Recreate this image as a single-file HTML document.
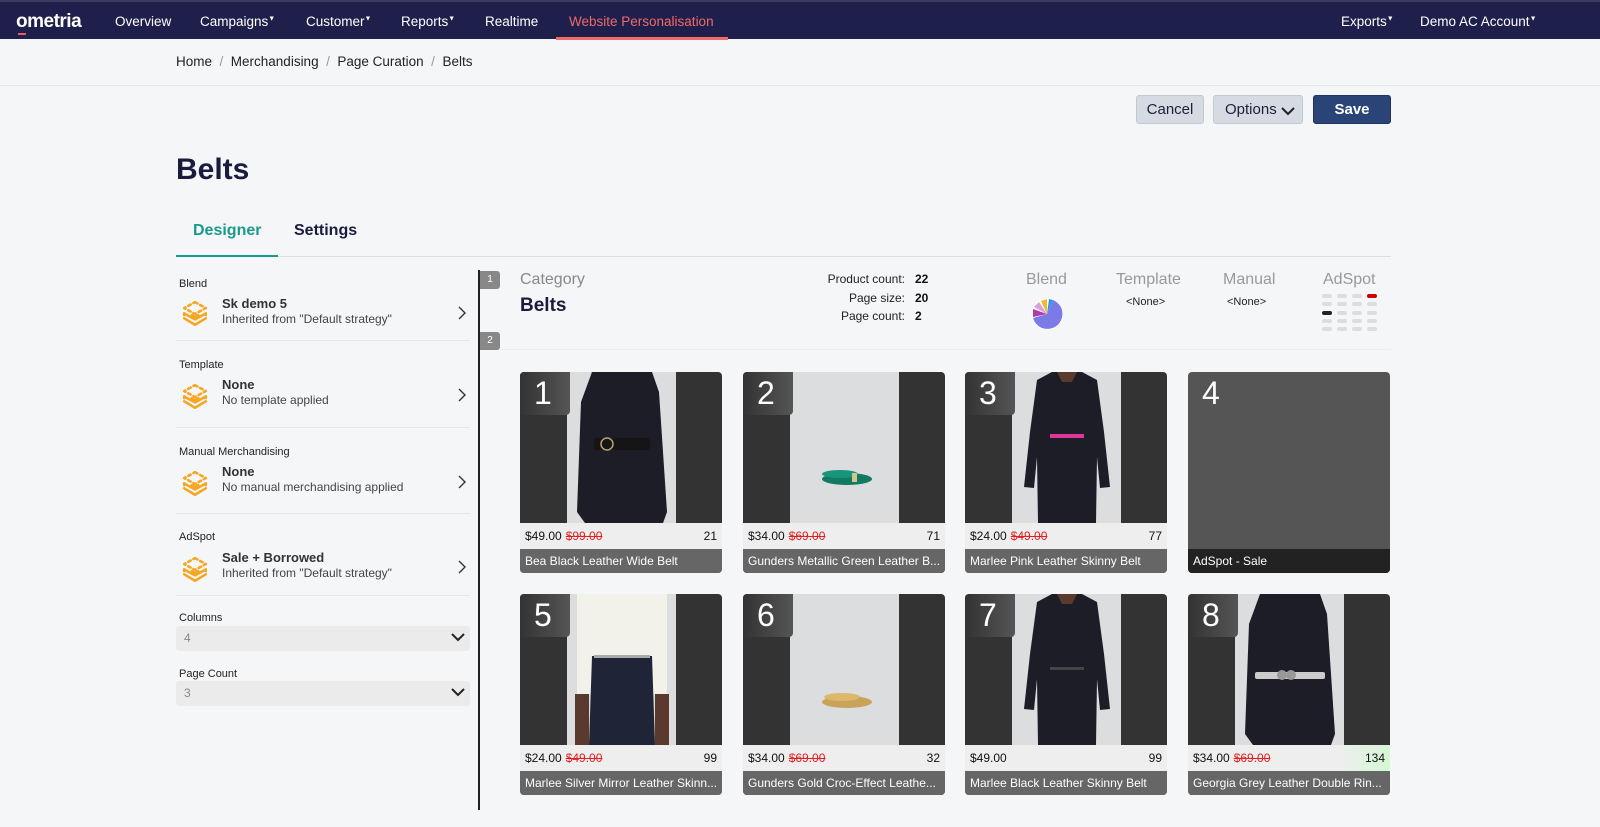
<!DOCTYPE html>
<html><head><meta charset="utf-8"><style>
*{box-sizing:border-box;margin:0;padding:0}
body{width:1600px;height:827px;background:#f5f6f8;font-family:"Liberation Sans",sans-serif;position:relative;overflow:hidden;color:#1e1f3b}
.a{position:absolute;white-space:nowrap}
.nav{left:0;top:0;width:1600px;height:39px;background:#1e1f4b;border-top:2px solid #3a3b5e}
.nav span{position:absolute;top:12px;color:#fff;font-size:13.5px}
.btn{position:absolute;top:95px;height:29px;border-radius:3px;font-size:15px;text-align:center;line-height:27px}
.lab{font-size:11px;color:#222}
.ttl{font-size:13px;font-weight:bold;color:#333}
.sub{font-size:12px;color:#444}
.sep{height:1px;background:#e6e7ea}
.card{position:absolute;width:202px;height:201px;border-radius:4px;overflow:hidden;background:#333}
.img{position:absolute;left:47px;top:0;width:109px;height:151px;background:#dcdddf;overflow:hidden}
.num{position:absolute;left:0;top:0;width:50px;height:43px;background:linear-gradient(90deg,#333,#555);border-bottom-right-radius:4px;color:#fff;font-size:32px;padding-left:14px;line-height:43px}
.pr{position:absolute;left:0;top:151px;width:202px;height:26px;background:#eee;font-size:12px;color:#111;line-height:26px;padding:0 5px}
.pr s{color:#e02020;margin-left:4px}
.pr b{float:right;font-weight:normal}
.nm{position:absolute;left:0;top:177px;width:202px;height:24px;background:#666;color:#fff;font-size:12px;line-height:24px;padding-left:5px}
.sel{position:absolute;left:176px;width:294px;height:25px;background:#ebebeb;border-radius:3px;font-size:12px;color:#888;padding:5px 8px}
.sel svg{position:absolute;right:5px;top:7px}
</style></head><body>
<svg width="0" height="0" style="position:absolute"><defs>
<g id="ic" fill="none" stroke="#f5a623" stroke-width="2.4" stroke-linecap="round" stroke-linejoin="round"><path d="M13 2L23 7.5L13 13L3 7.5Z" stroke-dasharray="2.5 3"/><path d="M3 12.5L13 18L23 12.5"/><path d="M3 12.5L3 14M23 12.5L23 14"/><path d="M3 17L13 23L23 17"/><path d="M10 14L13 16L16 14"/></g>
<path id="cv" d="M1 1L7 7L1 13" fill="none" stroke="#333" stroke-width="1.4"/>
<path id="dn" d="M1 1L7 7L13 1" fill="none" stroke="#222" stroke-width="2"/>
</defs></svg>
<div class="a nav">
<span style="left:16px;top:9px;font-size:19px;font-weight:bold;letter-spacing:-0.5px">ometria</span>
<div class="a" style="left:18px;top:31px;width:8px;height:2px;background:#e85c5c"></div>
<span style="left:115px">Overview</span>
<span style="left:200px">Campaigns<sup style="font-size:7px">▼</sup></span>
<span style="left:306px">Customer<sup style="font-size:7px">▼</sup></span>
<span style="left:401px">Reports<sup style="font-size:7px">▼</sup></span>
<span style="left:485px">Realtime</span>
<span style="left:569px;color:#f06a6a">Website Personalisation</span>
<div class="a" style="left:556px;top:35px;width:172px;height:3px;background:#f06a6a"></div>
<span style="left:1341px">Exports<sup style="font-size:7px">▼</sup></span>
<span style="left:1420px">Demo AC Account<sup style="font-size:7px">▼</sup></span>
</div>
<div class="a" style="left:176px;top:54px;font-size:13.5px;color:#222">Home <span style="color:#999">&nbsp;/&nbsp;</span> Merchandising <span style="color:#999">&nbsp;/&nbsp;</span> Page Curation <span style="color:#999">&nbsp;/&nbsp;</span> Belts</div>
<div class="a sep" style="left:0;top:85px;width:1600px"></div>
<div class="btn" style="left:1136px;width:68px;background:#d5dbe3;border:1px solid #c3cad4;color:#1e1f3b">Cancel</div>
<div class="btn" style="left:1213px;width:90px;background:#d5dbe3;border:1px solid #c3cad4;color:#1e1f3b;text-align:left;padding-left:11px">Options<svg style="position:absolute;right:7px;top:11px" width="14" height="9"><use href="#dn"/></svg></div>
<div class="btn" style="left:1313px;width:78px;background:#2a4478;border:1px solid #1e3463;color:#fff;font-weight:bold">Save</div>
<div class="a" style="left:176px;top:153px;font-size:30px;font-weight:bold;color:#1a1b3d">Belts</div>
<div class="a" style="left:193px;top:222px;font-size:16px;font-weight:bold;color:#1a9a8a">Designer</div>
<div class="a" style="left:294px;top:222px;font-size:16px;font-weight:bold;color:#1a1b3d">Settings</div>
<div class="a" style="left:176px;top:256px;width:1215px;height:1px;background:#ddd"></div>
<div class="a" style="left:176px;top:255px;width:102px;height:2px;background:#1a9a8a"></div>

<div class="a lab" style="left:179px;top:278px">Blend</div>
<svg class="a" style="left:181px;top:300px" width="28" height="28" viewBox="0 0 26 26"><use href="#ic"/></svg>
<div class="a ttl" style="left:222px;top:296px">Sk demo 5</div>
<div class="a sub" style="left:222px;top:312px">Inherited from "Default strategy"</div>
<svg class="a" style="left:458px;top:306px" width="9" height="15"><use href="#cv"/></svg>
<div class="a sep" style="left:176px;top:340px;width:294px"></div>
<div class="a lab" style="left:179px;top:359px">Template</div>
<svg class="a" style="left:181px;top:383px" width="28" height="28" viewBox="0 0 26 26"><use href="#ic"/></svg>
<div class="a ttl" style="left:222px;top:377px">None</div>
<div class="a sub" style="left:222px;top:393px">No template applied</div>
<svg class="a" style="left:458px;top:388px" width="9" height="15"><use href="#cv"/></svg>
<div class="a sep" style="left:176px;top:427px;width:294px"></div>
<div class="a lab" style="left:179px;top:446px">Manual Merchandising</div>
<svg class="a" style="left:181px;top:470px" width="28" height="28" viewBox="0 0 26 26"><use href="#ic"/></svg>
<div class="a ttl" style="left:222px;top:464px">None</div>
<div class="a sub" style="left:222px;top:480px">No manual merchandising applied</div>
<svg class="a" style="left:458px;top:475px" width="9" height="15"><use href="#cv"/></svg>
<div class="a sep" style="left:176px;top:513px;width:294px"></div>
<div class="a lab" style="left:179px;top:531px">AdSpot</div>
<svg class="a" style="left:181px;top:556px" width="28" height="28" viewBox="0 0 26 26"><use href="#ic"/></svg>
<div class="a ttl" style="left:222px;top:550px">Sale + Borrowed</div>
<div class="a sub" style="left:222px;top:566px">Inherited from "Default strategy"</div>
<svg class="a" style="left:458px;top:560px" width="9" height="15"><use href="#cv"/></svg>
<div class="a sep" style="left:176px;top:595px;width:294px"></div>
<div class="a lab" style="left:179px;top:612px">Columns</div>
<div class="sel" style="top:626px">4<svg width="14" height="9"><use href="#dn"/></svg></div>
<div class="a lab" style="left:179px;top:668px">Page Count</div>
<div class="sel" style="top:681px">3<svg width="14" height="9"><use href="#dn"/></svg></div>

<div class="a" style="left:478px;top:270px;width:2px;height:540px;background:#222"></div>
<div class="a" style="left:480px;top:271px;width:20px;height:18px;background:#888;color:#fff;font-size:10px;text-align:center;line-height:18px;border-radius:0 3px 3px 0">1</div>
<div class="a" style="left:480px;top:332px;width:20px;height:18px;background:#888;color:#fff;font-size:10px;text-align:center;line-height:18px;border-radius:0 3px 3px 0">2</div>

<div class="a" style="left:520px;top:271px;font-size:16px;color:#888">Category</div>
<div class="a" style="left:520px;top:295px;font-size:19px;font-weight:bold;color:#1a1b3d">Belts</div>
<div class="a" style="left:800px;top:270px;width:105px;text-align:right;font-size:12px;line-height:18.5px;color:#222">Product count:<br>Page size:<br>Page count:</div>
<div class="a" style="left:915px;top:270px;font-size:12px;line-height:18.5px;font-weight:bold;color:#111">22<br>20<br>2</div>
<div class="a" style="left:1026px;top:271px;font-size:16px;color:#999">Blend</div>
<svg class="a" style="left:1029px;top:296px" width="36" height="36" viewBox="-18 -18 36 36"><circle r="16" fill="#fff"/><path d="M0 0L6 -14A15 15 0 1 1 -14 4Z" fill="#7b7be8"/><path d="M0 0L-14 3L-14 -5Z" fill="#b23aa8"/><path d="M0 0L-13 -7L-8 -12Z" fill="#d9a0dd"/><path d="M0 0L-6 -13L0 -15Z" fill="#f5b82e"/><path d="M0 0L2 -15L6 -14Z" fill="#2b98e8"/></svg>
<div class="a" style="left:1116px;top:271px;font-size:16px;color:#999">Template</div>
<div class="a" style="left:1126px;top:296px;font-size:11px;color:#222">&lt;None&gt;</div>
<div class="a" style="left:1223px;top:271px;font-size:16px;color:#999">Manual</div>
<div class="a" style="left:1227px;top:296px;font-size:11px;color:#222">&lt;None&gt;</div>
<div class="a" style="left:1323px;top:271px;font-size:16px;color:#999">AdSpot</div>
<svg class="a" style="left:1321px;top:292px" width="60" height="42">
<g fill="#ddd"><rect x="1" y="2" width="10" height="4" rx="2"/><rect x="16" y="2" width="10" height="4" rx="2"/><rect x="31" y="2" width="10" height="4" rx="2"/>
<rect x="1" y="10" width="10" height="4" rx="2"/><rect x="16" y="10" width="10" height="4" rx="2"/><rect x="31" y="10" width="10" height="4" rx="2"/><rect x="46" y="10" width="10" height="4" rx="2"/>
<rect x="16" y="19" width="10" height="4" rx="2"/><rect x="31" y="19" width="10" height="4" rx="2"/><rect x="46" y="19" width="10" height="4" rx="2"/>
<rect x="1" y="27" width="10" height="4" rx="2"/><rect x="16" y="27" width="10" height="4" rx="2"/><rect x="31" y="27" width="10" height="4" rx="2"/><rect x="46" y="27" width="10" height="4" rx="2"/>
<rect x="1" y="35" width="10" height="4" rx="2"/><rect x="16" y="35" width="10" height="4" rx="2"/><rect x="31" y="35" width="10" height="4" rx="2"/><rect x="46" y="35" width="10" height="4" rx="2"/></g>
<rect x="46" y="2" width="10" height="4" rx="2" fill="#c00"/><rect x="1" y="19" width="10" height="4" rx="2" fill="#222"/></svg>
<div class="a sep" style="left:500px;top:349px;width:891px;background:#eceef0"></div>

<div class="card" style="left:520px;top:372px"><div class="img"><svg width="109" height="151"><path d="M25 0H85L92 20L100 140L96 151H18L10 140L14 30Z" fill="#1c1d26"/><rect x="27" y="66" width="56" height="12" rx="3" fill="#151515"/><circle cx="40" cy="72" r="6" fill="none" stroke="#b9a070" stroke-width="1.5"/></svg></div><div class="num">1</div><div class="pr">$49.00<s>$99.00</s><b>21</b></div><div class="nm">Bea Black Leather Wide Belt</div></div>
<div class="card" style="left:743px;top:372px"><div class="img"><svg width="109" height="151"><ellipse cx="57" cy="107" rx="25" ry="6" fill="#127a62"/><ellipse cx="50" cy="102" rx="18" ry="4" fill="#18957a"/><rect x="62" y="101" width="5" height="9" fill="#d6c58a"/></svg></div><div class="num">2</div><div class="pr">$34.00<s>$69.00</s><b>71</b></div><div class="nm">Gunders Metallic Green Leather B...</div></div>
<div class="card" style="left:965px;top:372px"><div class="img"><svg width="109" height="151"><path d="M40 0H70L85 8L92 60L98 115L88 116L85 85L84 151H26L25 85L22 116L12 115L18 60L25 8Z" fill="#1c1d26"/><path d="M45 0H65L60 10H50Z" fill="#5a3a2c"/><rect x="38" y="62" width="34" height="4" fill="#e0359a"/></svg></div><div class="num">3</div><div class="pr">$24.00<s>$49.00</s><b>77</b></div><div class="nm">Marlee Pink Leather Skinny Belt</div></div>
<div class="card" style="left:1188px;top:372px;background:#555"><div class="num" style="background:none">4</div><div class="nm" style="background:#222;top:177px">AdSpot - Sale</div></div>

<div class="card" style="left:520px;top:594px"><div class="img"><svg width="109" height="151"><rect x="10" y="0" width="90" height="100" fill="#f2f1ea"/><rect x="8" y="100" width="14" height="51" fill="#5a3a2c"/><rect x="88" y="100" width="14" height="51" fill="#5a3a2c"/><path d="M25 62H85L88 151H22Z" fill="#1f2436"/><rect x="27" y="61" width="56" height="3" fill="#aaa"/></svg></div><div class="num">5</div><div class="pr">$24.00<s>$49.00</s><b>99</b></div><div class="nm">Marlee Silver Mirror Leather Skinn...</div></div>
<div class="card" style="left:743px;top:594px"><div class="img"><svg width="109" height="151"><ellipse cx="57" cy="108" rx="25" ry="6" fill="#c9a35a"/><ellipse cx="52" cy="103" rx="18" ry="4" fill="#ddb86b"/></svg></div><div class="num">6</div><div class="pr">$34.00<s>$69.00</s><b>32</b></div><div class="nm">Gunders Gold Croc-Effect Leathe...</div></div>
<div class="card" style="left:965px;top:594px"><div class="img"><svg width="109" height="151"><path d="M40 0H70L85 8L92 60L98 115L88 116L85 85L84 151H26L25 85L22 116L12 115L18 60L25 8Z" fill="#1c1d26"/><path d="M45 0H65L60 10H50Z" fill="#5a3a2c"/><rect x="38" y="73" width="34" height="3" fill="#444"/></svg></div><div class="num">7</div><div class="pr">$49.00<b>99</b></div><div class="nm">Marlee Black Leather Skinny Belt</div></div>
<div class="card" style="left:1188px;top:594px"><div class="img"><svg width="109" height="151"><path d="M25 0H85L92 20L100 140L96 151H18L10 140L14 30Z" fill="#1c1d26"/><rect x="20" y="78" width="70" height="7" rx="2" fill="#ccc"/><circle cx="47" cy="81" r="5" fill="#999"/><circle cx="56" cy="81" r="5" fill="#999"/></svg></div><div class="num">8</div><div class="pr" style="background:linear-gradient(90deg,#eee 75%,#d4f7d4)">$34.00<s>$69.00</s><b>134</b></div><div class="nm">Georgia Grey Leather Double Rin...</div></div>
</body></html>
